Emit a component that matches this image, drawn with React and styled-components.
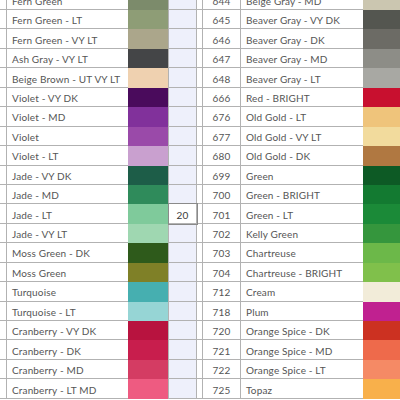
import React from 'react';
import styled, { createGlobalStyle } from 'styled-components';

const GlobalStyle = createGlobalStyle`
  html, body {
    margin: 0;
    padding: 0;
    background: #ffffff;
    overflow: hidden;
  }
`;

const leftRows = [
  ['Fern Green', '#7c8b6b'],
  ['Fern Green - LT', '#8e9d76'],
  ['Fern Green - VY LT', '#aba68b'],
  ['Ash Gray - VY LT', '#444547'],
  ['Beige Brown - UT VY LT', '#efd1b0'],
  ['Violet - VY DK', '#4a0b5c'],
  ['Violet - MD', '#81319b'],
  ['Violet', '#9a4aa9'],
  ['Violet - LT', '#c9a0cf'],
  ['Jade - VY DK', '#1d5d48'],
  ['Jade - MD', '#2f8b5b'],
  ['Jade - LT', '#7fca9b'],
  ['Jade - VY LT', '#9fd7b1'],
  ['Moss Green - DK', '#2e5a1b'],
  ['Moss Green', '#7f8027'],
  ['Turquoise', '#46afb0'],
  ['Turquoise - LT', '#96d5d5'],
  ['Cranberry - VY DK', '#b8133f'],
  ['Cranberry - DK', '#c81e4d'],
  ['Cranberry - MD', '#d43c63'],
  ['Cranberry - LT MD', '#ee5b81'],
];

const rightRows = [
  ['644', 'Beige Gray - MD', '#cbc6b0'],
  ['645', 'Beaver Gray - VY DK', '#545650'],
  ['646', 'Beaver Gray - DK', '#6c6b65'],
  ['647', 'Beaver Gray - MD', '#8d8d87'],
  ['648', 'Beaver Gray - LT', '#a8a8a3'],
  ['666', 'Red - BRIGHT', '#c8102f'],
  ['676', 'Old Gold - LT', '#efc47b'],
  ['677', 'Old Gold - VY LT', '#f2db9d'],
  ['680', 'Old Gold - DK', '#b07841'],
  ['699', 'Green', '#0d5a25'],
  ['700', 'Green - BRIGHT', '#137a31'],
  ['701', 'Green - LT', '#1b8a38'],
  ['702', 'Kelly Green', '#35963d'],
  ['703', 'Chartreuse', '#6cb849'],
  ['704', 'Chartreuse - BRIGHT', '#80c04b'],
  ['712', 'Cream', '#f2ecd9'],
  ['718', 'Plum', '#c02190'],
  ['720', 'Orange Spice - DK', '#cc3121'],
  ['721', 'Orange Spice - MD', '#ee6a4b'],
  ['722', 'Orange Spice - LT', '#f58a65'],
  ['725', 'Topaz', '#f8b04b'],
];

const LINE = '#b2b2b2';

// scrolled a little, the first row is half hidden like in the sheet
const Sheet = styled.div`
  margin-top: -9.45px;
  width: 420px;
  font-family: Lato, "Open Sans", sans-serif;
  font-size: 10px;
  letter-spacing: 0.15px;
  color: #555555;
`;

const Row = styled.div`
  display: grid;
  grid-template-columns: 7px 121px 41px 28px 6px 38px 122px 1fr;
  height: 19.45px;
`;

const Cell = styled.div`
  box-sizing: border-box;
  display: flex;
  align-items: center;
  justify-content: ${p => (p.$center ? 'center' : 'flex-start')};
  padding: 2px 0 0 ${p => (p.$center ? 0 : 5)}px;
  border-bottom: 1px solid ${LINE};
  border-right: ${p => (p.$noRight ? 'none' : `1px solid ${LINE}`)};
  background: #ffffff;
  white-space: nowrap;
  overflow: hidden;
`;

const Swatch = styled.div`
  box-sizing: border-box;
  background: ${p => p.$color};
  border-right: ${p => (p.$edge ? `1px solid ${LINE}` : 'none')};
`;

const QtyCell = styled(Cell)`
  position: relative;
  z-index: ${p => (p.$selected ? 2 : 0)};
  background: ${p => (p.$selected ? '#ffffff' : '#eef0fb')};
  outline: ${p => (p.$selected ? '1px solid #8a8a8a' : 'none')};
  color: #3a3a3a;
`;

const App = () => {
  return (
    <>
      <GlobalStyle />
      <Sheet>
        {leftRows.map(([name, color], i) => {
          const [num, rname, rcolor] = rightRows[i];
          const selected = name === 'Jade - LT';
          return (
            <Row key={name}>
              <Cell />
              <Cell $noRight>{name}</Cell>
              <Swatch $color={color} $edge />
              <QtyCell $center $selected={selected}>
                {selected ? '20' : ''}
              </QtyCell>
              <Cell />
              <Cell $center>{num}</Cell>
              <Cell $noRight>{rname}</Cell>
              <Swatch $color={rcolor} />
            </Row>
          );
        })}
      </Sheet>
    </>
  );
};

export default App;
